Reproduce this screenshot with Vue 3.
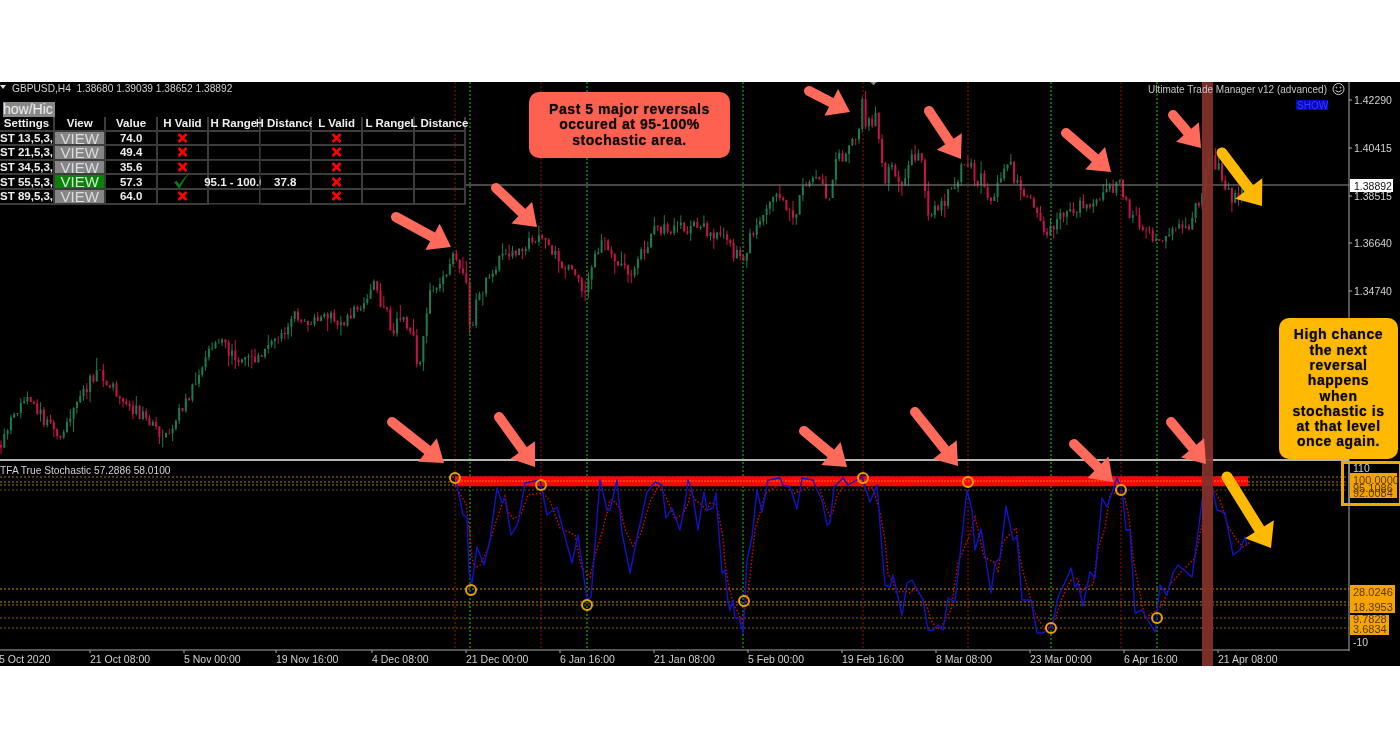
<script setup>
import { computed } from 'vue';

// Small seeded random so the candles come out the same on every load
const seeded = (seed) => () => {
  seed = (seed + 0x6d2b79f5) | 0;
  let t = Math.imul(seed ^ (seed >>> 15), 1 | seed);
  t = (t + Math.imul(t ^ (t >>> 7), 61 | t)) ^ t;
  return ((t ^ (t >>> 14)) >>> 0) / 4294967296;
};

const pricePath = [
  [0, 445], [8, 425], [30, 398], [45, 420], [60, 438], [75, 410], [95, 372], [115, 390], [130, 405],
  [150, 420], [165, 440], [178, 415], [190, 400], [200, 365], [215, 342], [225, 345], [235, 360],
  [240, 370], [245, 355], [255, 360], [265, 345], [280, 335], [295, 315], [310, 325], [320, 315],
  [345, 320], [355, 305], [368, 300], [375, 285], [380, 305], [387, 310], [392, 340], [400, 315],
  [405, 325], [415, 345], [418, 370], [425, 325], [430, 295], [440, 285], [455, 255], [462, 270],
  [468, 290], [471, 350], [475, 300], [480, 295], [490, 270], [515, 250], [540, 235], [560, 262],
  [585, 288], [600, 242], [630, 273], [655, 228], [700, 228], [725, 240], [742, 262], [750, 238],
  [778, 195], [795, 213], [802, 188], [812, 173], [828, 198], [835, 163], [847, 152], [858, 135],
  [863, 100], [866, 128], [877, 115], [880, 148], [885, 182], [892, 163], [902, 192], [910, 160],
  [922, 157], [928, 212], [943, 207], [953, 185], [968, 160], [977, 188], [982, 173], [990, 205],
  [1007, 160], [1017, 182], [1027, 200], [1033, 198], [1043, 238], [1060, 218], [1085, 205],
  [1120, 182], [1130, 215], [1155, 238], [1190, 225], [1203, 188], [1208, 158], [1218, 166],
  [1232, 198], [1245, 188],
];

const interp = (points, x) => {
  for (let i = 1; i < points.length; i++) {
    if (x <= points[i][0]) {
      const [x0, y0] = points[i - 1];
      const [x1, y1] = points[i];
      return y0 + ((y1 - y0) * (x - x0)) / (x1 - x0);
    }
  }
  return points[points.length - 1][1];
};

const candles = computed(() => {
  const rnd = seeded(41);
  const out = { upBody: '', upWick: '', downBody: '', downWick: '' };
  let prev = interp(pricePath, 0);
  for (let x = 1; x < 1246; x += 3.3) {
    const next = interp(pricePath, x) + (rnd() - 0.5) * 14;
    const top = Math.min(prev, next);
    const bottom = Math.max(prev, next);
    const px = x.toFixed(1);
    const wick = `M${px} ${(top - rnd() * rnd() * 14).toFixed(1)}V${(bottom + rnd() * rnd() * 14).toFixed(1)}`;
    const body = `M${px} ${top.toFixed(1)}V${bottom.toFixed(1)}`;
    if (next < prev) {
      out.upWick += wick;
      out.upBody += body;
    } else {
      out.downWick += wick;
      out.downBody += body;
    }
    prev = next;
  }
  return out;
});

const stochPoints = [
  [456, 480], [463, 515], [467, 517], [469, 573], [472, 583], [477, 547], [484, 565], [490, 540],
  [497, 488], [502, 503], [505, 498], [511, 535], [518, 523], [525, 483], [540, 480], [547, 515],
  [557, 507], [572, 563], [578, 535], [587, 600], [591, 597], [600, 480], [607, 510], [610, 510],
  [617, 480], [622, 533], [630, 573], [638, 533], [647, 492], [655, 482], [662, 485], [666, 518],
  [672, 508], [680, 530], [685, 503], [688, 480], [692, 490], [698, 530], [704, 492], [707, 510],
  [713, 508], [716, 493], [720, 547], [722, 573], [725, 570], [728, 603], [730, 610], [733, 600],
  [735, 618], [739, 618], [743, 633], [747, 560], [752, 537], [757, 490], [762, 512], [768, 480],
  [780, 478], [783, 485], [790, 487], [797, 509], [802, 478], [813, 480], [817, 490], [822, 500],
  [827, 525], [830, 523], [834, 487], [843, 478], [848, 485], [862, 477], [870, 502], [877, 485],
  [882, 550], [885, 585], [890, 587], [893, 575], [902, 615], [907, 583], [912, 580], [923, 600],
  [928, 630], [933, 630], [938, 625], [943, 630], [948, 598], [955, 602], [967, 490], [972, 510],
  [975, 550], [981, 529], [991, 593], [995, 563], [1000, 558], [1006, 506], [1013, 540], [1017, 537],
  [1022, 600], [1031, 600], [1037, 633], [1043, 633], [1052, 627], [1058, 597], [1067, 578],
  [1071, 568], [1075, 587], [1078, 583], [1083, 606], [1090, 572], [1095, 578], [1102, 498],
  [1107, 507], [1117, 478], [1122, 490], [1126, 530], [1130, 530], [1135, 613], [1142, 610],
  [1155, 632], [1160, 585], [1167, 595], [1173, 573], [1178, 565], [1192, 577], [1198, 533],
  [1205, 478], [1210, 478], [1217, 510], [1225, 513], [1233, 555], [1240, 550], [1245, 537], [1247, 545],
];
const stochLine = stochPoints.map((p) => p.join(',')).join(' ');
// Signal line lags the main one, so average neighbours and push it right
const signalLine = stochPoints
  .map(([x, y], i) => {
    const a = stochPoints[Math.max(i - 1, 0)][1];
    const b = stochPoints[Math.min(i + 1, stochPoints.length - 1)][1];
    return `${x + 3},${Math.round((a + y + b) / 3)}`;
  })
  .join(' ');

const redLines = [455, 541, 863, 968, 1121];
const greenLines = [470, 587, 743, 1051, 1157];
const levels = [
  { y: 477, color: '#a87408' }, { y: 482, color: '#a87408' }, { y: 485, color: '#a87408' },
  { y: 490, color: '#6b4a06' }, { y: 589, color: '#d08e10' }, { y: 602, color: '#c08410' },
  { y: 605, color: '#a87408' }, { y: 618, color: '#8a6008' }, { y: 628, color: '#8a6008' },
];
const circles = [
  [455, 478], [471, 590], [541, 485], [587, 605], [744, 601],
  [863, 478], [968, 482], [1051, 628], [1121, 490], [1157, 618],
];

const priceTicks = [
  ['1.42290', 100], ['1.40415', 148], ['1.38515', 196], ['1.36640', 243], ['1.34740', 291],
];
const timeTicks = [
  ['5 Oct 2020', -1], ['21 Oct 08:00', 90], ['5 Nov 00:00', 184], ['19 Nov 16:00', 276],
  ['4 Dec 08:00', 372], ['21 Dec 00:00', 466], ['6 Jan 16:00', 560], ['21 Jan 08:00', 654],
  ['5 Feb 00:00', 748], ['19 Feb 16:00', 842], ['8 Mar 08:00', 936], ['23 Mar 00:00', 1030],
  ['6 Apr 16:00', 1124], ['21 Apr 08:00', 1218],
];

// Arrow as tail -> tip, drawn as a thick line plus a wedge head
const arrow = ([x0, y0, x1, y1], width, headLen, headWide) => {
  const len = Math.hypot(x1 - x0, y1 - y0);
  const ux = (x1 - x0) / len;
  const uy = (y1 - y0) / len;
  const bx = x1 - ux * headLen;
  const by = y1 - uy * headLen;
  const p = (x, y) => `${x.toFixed(1)},${y.toFixed(1)}`;
  return {
    line: [x0, y0, bx + ux * 2, by + uy * 2],
    head: [p(x1, y1), p(bx - uy * headWide, by + ux * headWide), p(bx + uy * headWide, by - ux * headWide)].join(' '),
    width,
  };
};

const coralArrows = [
  [809, 91, 850, 112], [929, 111, 961, 159], [1066, 133, 1111, 172], [1173, 115, 1201, 148],
  [396, 217, 451, 247], [496, 188, 537, 227], [392, 422, 444, 463], [499, 417, 535, 467],
  [804, 431, 847, 467], [915, 412, 958, 466], [1074, 444, 1113, 482], [1171, 422, 1206, 464],
].map((a) => arrow(a, 10, 21, 15));
const yellowArrows = [[1222, 153, 1262, 206], [1227, 477, 1271, 548]].map((a) => arrow(a, 11, 22, 17));

const rows = [
  { name: 'ST 13,5,3,0', value: '74.0' },
  { name: 'ST 21,5,3,0', value: '49.4' },
  { name: 'ST 34,5,3,0', value: '35.6' },
  { name: 'ST 55,5,3,0', value: '57.3', valid: true, range: '95.1 - 100.0', distance: '37.8' },
  { name: 'ST 89,5,3,0', value: '64.0' },
];
const headers = ['Settings', 'View', 'Value', 'H Valid', 'H Range', 'H Distance', 'L Valid', 'L Range', 'L Distance'];
</script>

<template>
  <div class="page">
    <div class="chart">
      <svg class="plot" width="1400" height="584" viewBox="0 82 1400 584">
        <path :d="candles.upWick" class="wick-up" />
        <path :d="candles.downWick" class="wick-down" />
        <path :d="candles.upBody" class="body-up" />
        <path :d="candles.downBody" class="body-down" />

        <line v-for="x in redLines" :key="'r' + x" :x1="x" :x2="x" y1="82" y2="650" class="v-red" />
        <line v-for="x in greenLines" :key="'g' + x" :x1="x" :x2="x" y1="82" y2="650" class="v-green" />

        <line
          v-for="l in levels"
          :key="'l' + l.y"
          x1="0"
          x2="1349"
          :y1="l.y"
          :y2="l.y"
          :stroke="l.color"
          class="level"
        />
        <rect x="455" y="476.5" width="793" height="9.5" class="band" />
        <line x1="455" x2="1248" y1="481" y2="481" class="band-core" />
        <line x1="455" x2="1248" y1="476.5" y2="476.5" class="band-edge" />
        <line x1="455" x2="1248" y1="486" y2="486" class="band-edge" />
        <polyline :points="signalLine" class="signal" />
        <polyline :points="stochLine" class="stoch" />
        <circle v-for="c in circles" :key="c[0]" :cx="c[0]" :cy="c[1]" r="5" class="ring" />

        <line x1="0" x2="1349" y1="460" y2="460" class="divider" />
        <line x1="466" x2="1349" y1="185" y2="185" class="price-line" />
        <line x1="0" x2="1349" y1="650" y2="650" class="axis" />
        <line x1="1349" x2="1349" y1="82" y2="651" class="axis" />

        <polygon points="870,82 877,82 873.5,85" fill="#8a8a8a" />
        <polygon points="0,85 6,85 3,89" fill="#ddd" />
        <text x="12" y="92" class="label small">GBPUSD,H4&nbsp; 1.38680 1.39039 1.38652 1.38892</text>
        <text x="0" y="474" class="label small">TFA True Stochastic 57.2886 58.0100</text>

        <g v-for="t in priceTicks" :key="t[0]">
          <line x1="1349" x2="1352" :y1="t[1]" :y2="t[1]" class="axis" />
          <text x="1354" :y="t[1] + 4" class="label">{{ t[0] }}</text>
        </g>
        <rect x="1350" y="179" width="43" height="13" fill="#fff" />
        <text x="1354" y="190" class="label dark">1.38892</text>

        <g v-for="t in timeTicks" :key="t[0]">
          <line :x1="t[1]" :x2="t[1]" y1="650" y2="653" class="axis" />
          <text :x="t[1]" y="663" class="label">{{ t[0] }}</text>
        </g>

        <rect x="1342.5" y="462.5" width="58" height="42" class="level-frame" />
        <line x1="1349" x2="1349" y1="461" y2="506" class="axis" />
        <text x="1353" y="472" class="label">110</text>
        <rect x="1350" y="473" width="47" height="25" fill="#f5a300" />
        <text x="1353" y="484" class="label level-text">100.0000</text>
        <text x="1353" y="492" class="label level-text">95.1086</text>
        <text x="1353" y="497" class="label level-text">92.0084</text>

        <text x="1353" y="646" class="label">-10</text>
        <rect x="1350" y="585" width="45" height="28" fill="#f5a300" />
        <text x="1353" y="596" class="label level-text">28.0246</text>
        <text x="1353" y="611" class="label level-text">18.3953</text>
        <rect x="1350" y="615" width="39" height="20" fill="#f5a300" />
        <text x="1353" y="623" class="label level-text">9.7828</text>
        <text x="1353" y="633" class="label level-text">3.6834</text>

        <rect x="1202" y="82" width="11" height="584" class="marker" />

        <text x="1148" y="93" class="label tiny">Ultimate Trade Manager v12 (advanced)</text>
        <g class="smile">
          <circle cx="1338.5" cy="89" r="5.5" />
          <circle cx="1336.5" cy="87.5" r="0.5" />
          <circle cx="1340.5" cy="87.5" r="0.5" />
          <path d="M1335.5 90.5q3 3 6 0" />
        </g>
        <rect x="1296" y="100" width="32" height="10" fill="#0808c8" />
        <text x="1297" y="109" class="label show">SHOW</text>

        <g v-for="(a, i) in coralArrows" :key="'c' + i">
          <line :x1="a.line[0]" :y1="a.line[1]" :x2="a.line[2]" :y2="a.line[3]" :stroke-width="a.width" class="coral-line" />
          <polygon :points="a.head" class="coral-head" />
        </g>
        <g v-for="(a, i) in yellowArrows" :key="'y' + i">
          <line :x1="a.line[0]" :y1="a.line[1]" :x2="a.line[2]" :y2="a.line[3]" :stroke-width="a.width" class="yellow-line" />
          <polygon :points="a.head" class="yellow-head" />
        </g>
      </svg>

      <div class="panel">
        <div class="toggle">how/Hic</div>
        <div class="grid">
          <div v-for="h in headers" :key="h" class="cell head" :class="{ cut: h === 'H Distance' }">
            <span>{{ h }}</span>
          </div>
          <template v-for="row in rows" :key="row.name">
            <div class="cell name"><span>{{ row.name }}</span></div>
            <div class="cell"><span class="view" :class="{ active: row.valid }">VIEW</span></div>
            <div class="cell"><span>{{ row.value }}</span></div>
            <div class="cell">
              <svg v-if="row.valid" class="check" width="18" height="15" viewBox="0 0 18 15">
                <path d="M1 9l3-1 2.5 3.5C9 7 12.5 3 17 0c-3.5 4-7 8.5-10 15h-1.5z" />
              </svg>
              <svg v-else width="11" height="10" viewBox="0 0 11 10">
                <path d="M1.5 1l8 8M9.5 1l-8 8" class="cross" />
              </svg>
            </div>
            <div class="cell range"><span>{{ row.range }}</span></div>
            <div class="cell"><span>{{ row.distance }}</span></div>
            <div class="cell">
              <svg width="11" height="10" viewBox="0 0 11 10">
                <path d="M1.5 1l8 8M9.5 1l-8 8" class="cross" />
              </svg>
            </div>
            <div class="cell"></div>
            <div class="cell"></div>
          </template>
        </div>
      </div>

      <div class="note note-coral">Past 5 major reversals<br />occured at 95-100%<br />stochastic area.</div>
      <div class="note note-yellow">High chance<br />the next<br />reversal<br />happens<br />when<br />stochastic is<br />at that level<br />once again.</div>
    </div>
  </div>
</template>

<style>
html, body {
  background: #fff;
}
</style>

<style scoped>
.page {
  height: 750px;
  padding-top: 82px;
  box-sizing: border-box;
  overflow: hidden;
  font-family: "Liberation Sans", Arial, sans-serif;
}

.chart {
  position: relative;
  width: 1400px;
  height: 584px;
  background: #000;
  overflow: hidden;
}

/* The reference is a soft upscaled capture */
.plot,
.panel,
.note {
  filter: blur(0.4px);
}

.plot {
  display: block;
}

.wick-up,
.wick-down,
.body-up,
.body-down {
  fill: none;
}

.wick-up,
.wick-down {
  stroke-width: 1;
}

.body-up,
.body-down {
  stroke-width: 2;
}

.wick-up,
.body-up {
  stroke: #1a7a50;
}

.wick-down,
.body-down {
  stroke: #c8104a;
}

.v-red {
  stroke: #9c0c0c;
  stroke-dasharray: 2 2;
}

.v-green {
  stroke: #0ca00c;
  stroke-dasharray: 2 2;
  stroke-width: 1.3;
}

.level {
  stroke-dasharray: 2 2;
}

.band {
  fill: #f40a0a;
}

.band-core {
  stroke: #ff3c00;
  stroke-width: 2;
  stroke-dasharray: 2 1;
}

.band-edge {
  stroke: #d00a0a;
  stroke-dasharray: 2 1.5;
}

.stoch {
  fill: none;
  stroke: #1212c8;
  stroke-width: 1.4;
  stroke-linejoin: round;
}

.signal {
  fill: none;
  stroke: #d40a0a;
  stroke-width: 1.4;
  stroke-dasharray: 1.5 2;
}

.ring {
  fill: none;
  stroke: #e8a200;
  stroke-width: 2;
}

.divider {
  stroke: #b4b4b4;
  stroke-width: 2;
}

.price-line {
  stroke: #8e8e8e;
}

.axis {
  stroke: #a8a8a8;
}

.label {
  font-family: "Liberation Sans", Arial, sans-serif;
  font-size: 10.5px;
  fill: #d0d0d0;
}

.label.small {
  font-size: 10.2px;
}

.label.tiny {
  font-size: 10px;
  fill: #c4c4c4;
}

.label.dark {
  fill: #111;
}

.label.show {
  fill: #3a3aff;
  font-size: 10px;
}

.label.level-text {
  fill: #5a3a00;
  font-size: 11px;
}

.smile {
  fill: none;
  stroke: #ccc;
}

.level-frame {
  fill: none;
  stroke: #f0a800;
  stroke-width: 3;
}

.marker {
  fill: #85312a;
  opacity: 0.92;
}

.coral-line,
.yellow-line {
  stroke-linecap: round;
}

.coral-line {
  stroke: #ff6a5a;
}

.coral-head {
  fill: #ff6a5a;
}

.yellow-line {
  stroke: #ffb900;
}

.yellow-head {
  fill: #ffb900;
}

.panel {
  position: absolute;
  left: 0;
  top: 20px;
  width: 470px;
}

.toggle {
  margin-left: 3px;
  width: 52px;
  height: 15px;
  background: #888;
  color: #eee;
  font-size: 14px;
  line-height: 15px;
  overflow: hidden;
  white-space: nowrap;
}

.grid {
  display: grid;
  grid-template-columns: 55px repeat(8, 51.4px);
  grid-auto-rows: 14.6px;
  width: 466px;
}

.cell {
  display: flex;
  align-items: center;
  justify-content: center;
  box-sizing: border-box;
  border-right: 2px solid #3c3c3c;
  border-bottom: 2px solid #3c3c3c;
  color: #eee;
  font-size: 11.5px;
  font-weight: 700;
  white-space: nowrap;
  min-width: 0;
}

.cell.head.cut {
  clip-path: inset(0 0 0 -4px);
}

.cell.name {
  justify-content: flex-start;
  overflow: hidden;
}

.cell.range {
  justify-content: flex-start;
  clip-path: inset(0 0 0 -6px);
}

.cell.range span {
  margin-left: -5px;
}

.view {
  width: 100%;
  height: 100%;
  background: #858585;
  color: #dcdcdc;
  font-size: 15px;
  font-weight: 400;
  line-height: 13px;
  text-align: center;
}

.view.active {
  background: #0a820a;
  color: #cfe8cf;
}

.cross {
  stroke: #f00;
  stroke-width: 2.6;
  fill: none;
}

.check {
  margin-top: -3px;
}

.check path {
  fill: #0a7a0a;
}

.note {
  position: absolute;
  box-sizing: border-box;
  color: #0a0a0a;
  font-size: 14px;
  font-weight: 700;
  line-height: 15.3px;
  letter-spacing: 0.55px;
  text-align: center;
  white-space: nowrap;
  text-shadow: 0 0 1px rgba(0, 0, 0, 0.7);
  display: flex;
  align-items: center;
  justify-content: center;
}

.note-coral {
  left: 529px;
  top: 10px;
  width: 201px;
  height: 66px;
  background: #ff6150;
  border-radius: 10px;
}

.note-yellow {
  left: 1279px;
  top: 236px;
  width: 119px;
  height: 141px;
  background: #ffb900;
  border-radius: 10px;
}
</style>
